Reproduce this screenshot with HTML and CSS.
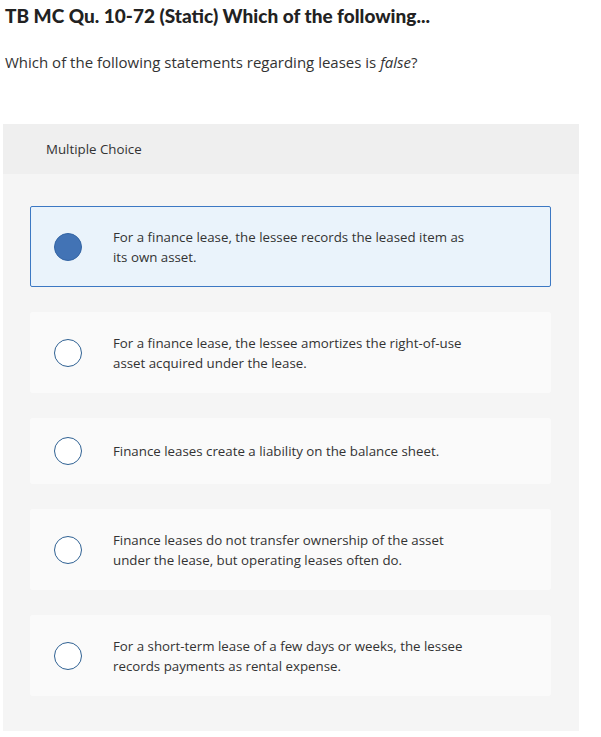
FILE: index.html
```html
<!DOCTYPE html>
<html>
<head>
<meta charset="utf-8">
<link rel="stylesheet" href="styles.css">
</head>
<body>
<h1 class="title">TB MC Qu. 10-72 (Static) Which of the following...</h1>
<p class="question">Which of the following statements regarding leases is <em>false</em>?</p>
<div class="panel">
  <div class="panel-head">Multiple Choice</div>
  <div class="options">
    <div class="option selected">
      <span class="radio-wrap"><span class="radio"></span></span>
      <span class="text">For a finance lease, the lessee records the leased item as<br>its own asset.</span>
    </div>
    <div class="option">
      <span class="radio-wrap"><span class="radio"></span></span>
      <span class="text">For a finance lease, the lessee amortizes the right-of-use<br>asset acquired under the lease.</span>
    </div>
    <div class="option">
      <span class="radio-wrap"><span class="radio"></span></span>
      <span class="text">Finance leases create a liability on the balance sheet.</span>
    </div>
    <div class="option">
      <span class="radio-wrap"><span class="radio"></span></span>
      <span class="text">Finance leases do not transfer ownership of the asset<br>under the lease, but operating leases often do.</span>
    </div>
    <div class="option">
      <span class="radio-wrap"><span class="radio"></span></span>
      <span class="text">For a short-term lease of a few days or weeks, the lessee<br>records payments as rental expense.</span>
    </div>
  </div>
</div>
</body>
</html>
```
FILE: styles.css
```css
body {
  margin: 0;
  background: #fff;
  font-family: "Open Sans", "Lato", sans-serif;
  color: #333;
}
.title {
  margin: 0;
  padding: 4px 0 0 5px;
  font-family: "Lato", sans-serif;
  font-size: 19px;
  line-height: 24px;
  font-weight: 900;
  color: #222;
}
.question {
  margin: 24px 0 0 5px;
  font-size: 15px;
  line-height: 20px;
  color: #333;
}
.question em {
  font-style: italic;
}
.panel {
  margin: 52px 0 0 3px;
  width: 576px;
  background: #f5f5f5;
  padding-bottom: 35px;
}
.panel-head {
  background: #efefef;
  height: 50px;
  line-height: 50px;
  padding-left: 43px;
  font-size: 13.3px;
  color: #333;
}
.options {
  padding: 32px 28px 0 27px;
  display: flex;
  flex-direction: column;
  gap: 25px;
}
.option {
  display: flex;
  align-items: center;
  padding: 19.5px 0;
  background: #fafafa;
  border: 1px solid #fafafa;
  border-radius: 2px;
}
.option.selected {
  background: #eaf3fb;
  border-color: #3c78c3;
}
.radio-wrap {
  width: 82px;
  height: 25px;
  flex: none;
  display: flex;
  align-items: center;
  padding-left: 23px;
  box-sizing: border-box;
}
.radio {
  width: 28px;
  height: 28px;
  flex: none;
  box-sizing: border-box;
  border-radius: 50%;
  border: 1.5px solid #2f6193;
  background: #fff;
}
.selected .radio {
  background: #4273b5;
  border-color: #3465a4;
}
.text {
  font-size: 13.3px;
  line-height: 20px;
  color: #333;
}
```
